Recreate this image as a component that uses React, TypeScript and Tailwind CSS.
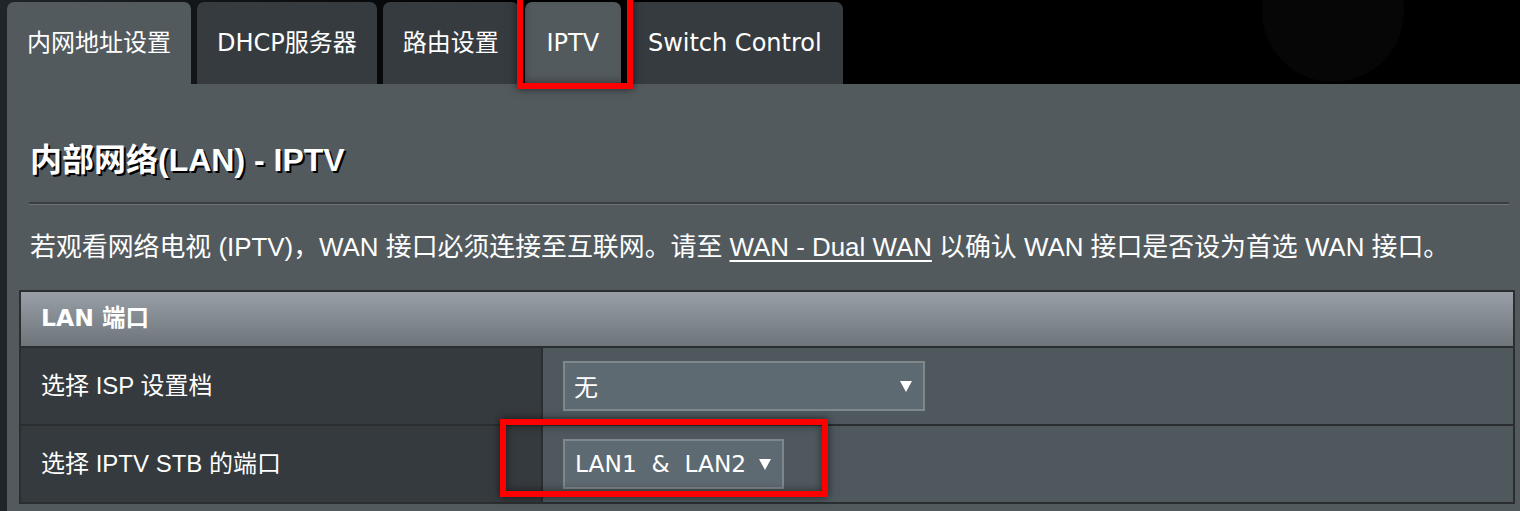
const tabs = [
  { label: "内网地址设置", active: true, width: "" },
  { label: "DHCP服务器", active: false, width: "" },
  { label: "路由设置", active: false, width: "w-[136px]" },
  { label: "IPTV", active: true, width: "w-[96px]" },
  { label: "Switch Control", active: false, width: "w-[216px]" },
];

const Arrow = () => (
  <svg width="12" height="11" viewBox="0 0 12 11" className="shrink-0">
    <polygon points="0,0 12,0 6,11" fill="#ffffff" />
  </svg>
);

const App = () => {
  return (
    <div className="relative h-[511px] w-[1520px] overflow-hidden bg-[linear-gradient(90deg,#1f2529_0px,#0c0e10_300px,#000_520px)] text-white">
      {/* faint blob in the top background */}
      <div className="absolute left-[1262px] top-[-60px] h-[142px] w-[142px] rounded-full bg-[#060606]" />

      <div className="relative flex h-full flex-col">
        {/* Tabs */}
        <div className="flex h-[84px] items-end gap-[6px] pl-[7px] font-['DejaVu_Sans','Noto_Sans_CJK_SC',sans-serif]">
          {tabs.map((tab) => (
            <div
              key={tab.label}
              className={`flex h-[82px] shrink-0 items-center justify-center whitespace-nowrap rounded-t-[7px] px-[18px] text-[24px] ${tab.width} ${
                tab.active ? "bg-[#535a5e]" : "bg-[#363b40]"
              } ${tab.width ? "" : "px-[20px]"}`}
            >
              {tab.label}
            </div>
          ))}
        </div>

        {/* Panel */}
        <div className="ml-[7px] flex-1 bg-[#525a5e] pt-[56px]">
          <div className="pl-[22px] pr-[11px] font-['Liberation_Sans','Noto_Sans_CJK_SC',sans-serif]">
            <h1 className="h-[40px] pl-[1px] text-[32px] font-bold leading-[40px] [text-shadow:2px_2px_0_#000]">
              内部网络(LAN) - IPTV
            </h1>
            <div className="mt-[22px] border-t-2 border-b border-t-[#393e42] border-b-[#6c747a]" />
            <p className="mt-[22px] h-[40px] pl-[1px] text-[25.9px] leading-[40px]">
              若观看网络电视 (IPTV)，WAN 接口必须连接至互联网。请至{" "}
              <a href="#" className="underline underline-offset-[4px]">
                WAN - Dual WAN
              </a>{" "}
              以确认 WAN 接口是否设为首选 WAN 接口。
            </p>
          </div>

          {/* LAN port table */}
          <div className="ml-[12px] mr-[5px] mt-[23px] border-2 border-[#2a2e31]">
            <div className="flex h-[54px] items-center bg-[linear-gradient(180deg,#989fa6,#6d757b)] pl-[20px] font-['DejaVu_Sans','Noto_Sans_CJK_SC',sans-serif] text-[23.5px] font-bold">
              LAN 端口
            </div>

            <div className="flex h-[78px] border-t-2 border-[#2a2e31]">
              <div className="flex w-[522px] items-center border-r-2 border-[#2a2e31] bg-[#353a3e] pl-[20px] font-['Liberation_Sans','Noto_Sans_CJK_SC',sans-serif] text-[24px]">
                选择 ISP 设置档
              </div>
              <div className="flex flex-1 items-center bg-[#4e585d] pl-[20px]">
                <div className="flex h-[50px] w-[362px] items-center justify-between border-2 border-[#7e878c] bg-[#5e6a71] pl-[9px] pr-[11px]">
                  <span className="font-['Noto_Sans_CJK_SC',sans-serif] text-[24px]">无</span>
                  <Arrow />
                </div>
              </div>
            </div>

            <div className="flex h-[78px] border-t-2 border-[#2a2e31]">
              <div className="flex w-[522px] items-center border-r-2 border-[#2a2e31] bg-[#353a3e] pl-[20px] font-['Liberation_Sans','Noto_Sans_CJK_SC',sans-serif] text-[24px]">
                选择 IPTV STB 的端口
              </div>
              <div className="flex flex-1 items-center bg-[#4e585d] pl-[20px]">
                <div className="flex h-[50px] items-center gap-[13px] border-2 border-[#7e878c] bg-[#5e6a71] pl-[10px] pr-[11px]">
                  <span className="font-['DejaVu_Sans',sans-serif] text-[23.3px]">
                    LAN1&nbsp;&nbsp;&amp;&nbsp;&nbsp;LAN2
                  </span>
                  <Arrow />
                </div>
              </div>
            </div>
          </div>
        </div>
      </div>

      {/* Red highlight boxes */}
      <div className="absolute left-[517px] top-[-10px] h-[99px] w-[116px] border-[6px] border-[#ff0000] shadow-[0_0_8px_rgba(0,0,0,0.6),inset_0_0_8px_rgba(0,0,0,0.5)]" />
      <div className="absolute left-[500px] top-[419px] h-[78px] w-[328px] border-[6px] border-[#ff0000] shadow-[0_0_8px_rgba(0,0,0,0.6),inset_0_0_8px_rgba(0,0,0,0.5)]" />
    </div>
  );
};

export default App;
